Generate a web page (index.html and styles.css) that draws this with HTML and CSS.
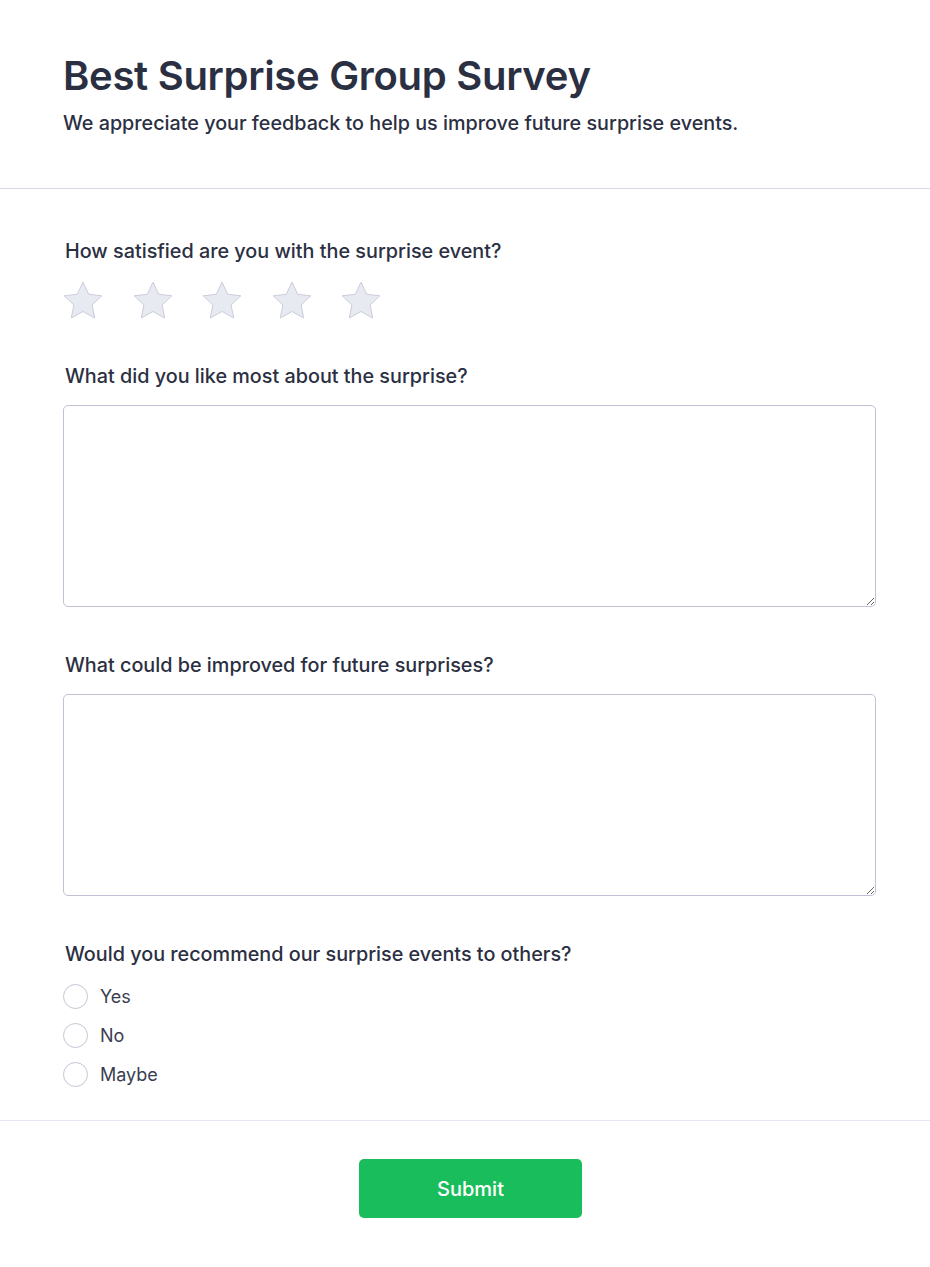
FILE: index.html
```html
<!DOCTYPE html><html lang="en">
<head>
  <meta charset="UTF-8">
  <title>Best Surprise Group Survey</title>
  <link rel="stylesheet" href="styles.css">
</head>
<body>
  <header class="header">
    <h1>Best Surprise Group Survey</h1>
    <p>We appreciate your feedback to help us improve future surprise events.</p>
  </header>

  <form class="survey">
    <div class="question">
      <label class="label">How satisfied are you with the surprise event?</label>
      <div class="stars">
        <svg class="star" viewBox="2 2 20 19.2"><path d="M12 2.6l2.9 6.1 6.6.8-4.9 4.6 1.3 6.6L12 17.4l-5.9 3.3 1.3-6.6-4.9-4.6 6.6-.8z"/></svg>
        <svg class="star" viewBox="2 2 20 19.2"><path d="M12 2.6l2.9 6.1 6.6.8-4.9 4.6 1.3 6.6L12 17.4l-5.9 3.3 1.3-6.6-4.9-4.6 6.6-.8z"/></svg>
        <svg class="star" viewBox="2 2 20 19.2"><path d="M12 2.6l2.9 6.1 6.6.8-4.9 4.6 1.3 6.6L12 17.4l-5.9 3.3 1.3-6.6-4.9-4.6 6.6-.8z"/></svg>
        <svg class="star" viewBox="2 2 20 19.2"><path d="M12 2.6l2.9 6.1 6.6.8-4.9 4.6 1.3 6.6L12 17.4l-5.9 3.3 1.3-6.6-4.9-4.6 6.6-.8z"/></svg>
        <svg class="star" viewBox="2 2 20 19.2"><path d="M12 2.6l2.9 6.1 6.6.8-4.9 4.6 1.3 6.6L12 17.4l-5.9 3.3 1.3-6.6-4.9-4.6 6.6-.8z"/></svg>
      </div>
    </div>

    <div class="question">
      <label class="label" for="liked">What did you like most about the surprise?</label>
      <textarea id="liked"></textarea>
    </div>

    <div class="question">
      <label class="label" for="improve">What could be improved for future surprises?</label>
      <textarea id="improve"></textarea>
    </div>

    <div class="question">
      <label class="label">Would you recommend our surprise events to others?</label>
      <div class="options">
        <label class="option"><input type="radio" name="recommend"> Yes</label>
        <label class="option"><input type="radio" name="recommend"> No</label>
        <label class="option"><input type="radio" name="recommend"> Maybe</label>
      </div>
    </div>
  </form>

  <footer class="footer">
    <button type="button">Submit</button>
  </footer>
</body>
</html>
```

FILE: styles.css
```css
* {
  margin: 0;
  padding: 0;
  box-sizing: border-box;
  font-family: Inter, 'Noto Sans', sans-serif;
}

body {
  background-color: #fff;
  color: #2b2f42;
}

.header {
  padding: 52px 54px 53px 63px;
  border-bottom: 1px solid #d9d9e6;
}

.header h1 {
  font-size: 40px;
  font-weight: 600;
  letter-spacing: -0.3px;
  line-height: 48px;
}

.header p {
  margin-top: 11px;
  font-size: 19.75px;
  font-weight: 500;
  line-height: 24px;
}

.survey {
  padding: 50px 54px 33px 63px;
  border-bottom: 1px solid #e6e7f0;
  display: flex;
  flex-direction: column;
}

.question {
  display: flex;
  flex-direction: column;
  margin-bottom: 46px;
}

.question:first-child {
  margin-bottom: 45px;
}

.question:last-child {
  margin-bottom: 0;
}

.label {
  padding-left: 2px;
  font-size: 19.8px;
  font-weight: 500;
  line-height: 24px;
  color: #2b2f42;
  margin-bottom: 17px;
}

.stars {
  display: flex;
  gap: 29.5px;
  margin-top: 1px;
}

.star {
  width: 40px;
  height: 38px;
  fill: #e8eaf1;
  stroke: #c9ccda;
  stroke-width: 0.5;
  stroke-linejoin: round;
}

textarea {
  width: 100%;
  height: 202px;
  border: 1px solid #bfc2d4;
  border-radius: 5px;
  resize: vertical;
  padding: 10px;
  font-size: 16px;
}

.options {
  display: flex;
  flex-direction: column;
  gap: 14px;
  margin-top: 1px;
}

.option {
  display: flex;
  align-items: center;
  gap: 12px;
  font-size: 18px;
  color: #3a3e50;
  line-height: 24px;
}

.option input {
  appearance: none;
  width: 25px;
  height: 25px;
  border: 1px solid #c3c6d4;
  border-radius: 50%;
  background: #fff;
}

.footer {
  display: flex;
  justify-content: center;
  padding: 38px 54px 50px 65px;
}

.footer button {
  width: 223px;
  height: 59px;
  border: none;
  border-radius: 5px;
  background-color: #1abd5b;
  color: #fff;
  font-size: 20px;
  font-weight: 500;
  cursor: pointer;
}
```
